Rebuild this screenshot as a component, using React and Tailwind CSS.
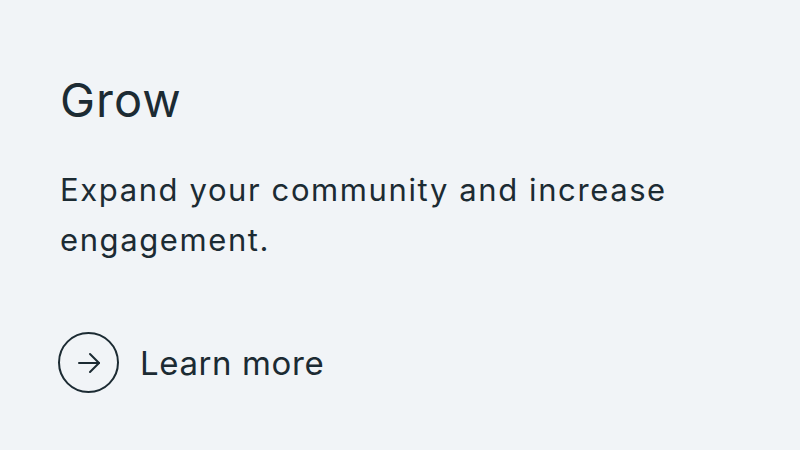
export default function App() {
  return (
    <div className="w-[800px] h-[450px] bg-[#f1f4f7] text-[#1c2b33] font-['Inter',sans-serif] px-[60px] pt-[72px] flex flex-col">
      <h1 className="text-[47px] leading-[56px] font-normal tracking-[1px]">Grow</h1>
      <p className="mt-[37px] text-[31px] leading-[50px] w-[680px] tracking-[1.6px]">
        Expand your community and increase engagement.
      </p>
      <a href="#" className="mt-[67px] flex items-center gap-[21px] self-start">
        <span className="w-[61px] h-[61px] rounded-full border-2 border-[#1c2b33] flex items-center justify-center -ml-[2px]">
          <svg width="24" height="24" viewBox="0 0 24 24" fill="none" stroke="currentColor" strokeWidth="2" strokeLinecap="round" strokeLinejoin="round">
            <path d="M2 12h20" />
            <path d="M13 3l9 9-9 9" />
          </svg>
        </span>
        <span className="text-[33px] leading-[40px] tracking-[0.6px]">Learn more</span>
      </a>
    </div>
  );
}
